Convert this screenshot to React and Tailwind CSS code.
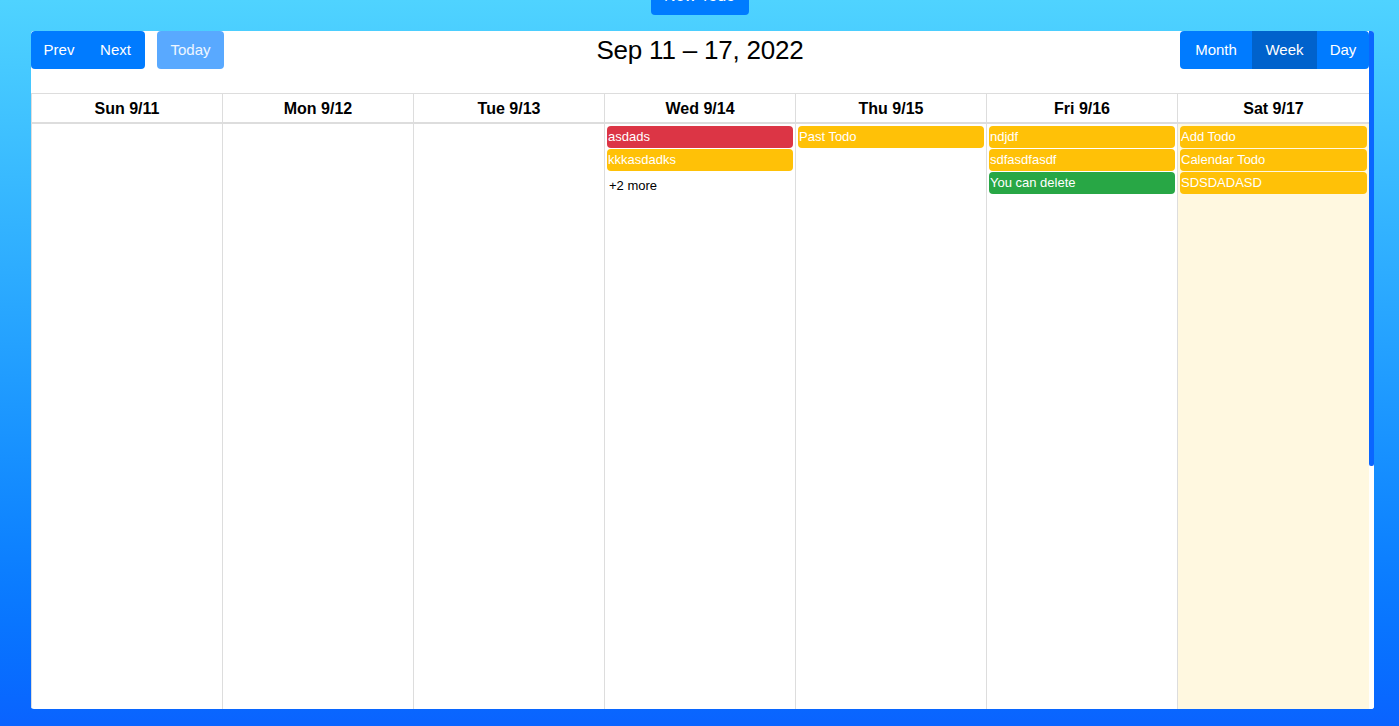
import React from 'react';

const DAYS = ['Sun 9/11', 'Mon 9/12', 'Tue 9/13', 'Wed 9/14', 'Thu 9/15', 'Fri 9/16', 'Sat 9/17'];

const EVENTS = {
  3: [
    { title: 'asdads', color: 'bg-[#dc3545]' },
    { title: 'kkkasdadks', color: 'bg-[#ffc107]' },
  ],
  4: [{ title: 'Past Todo', color: 'bg-[#ffc107]' }],
  5: [
    { title: 'ndjdf', color: 'bg-[#ffc107]' },
    { title: 'sdfasdfasdf', color: 'bg-[#ffc107]' },
    { title: 'You can delete', color: 'bg-[#28a745]' },
  ],
  6: [
    { title: 'Add Todo', color: 'bg-[#ffc107]' },
    { title: 'Calendar Todo', color: 'bg-[#ffc107]' },
    { title: 'SDSDADASD', color: 'bg-[#ffc107]' },
  ],
};

const MORE = { 3: 2 };

export default function App() {
  return (
    <div
      className="h-[726px] overflow-hidden bg-gradient-to-b from-[#4fd3ff] to-[#0a63ff] text-[#212529]"
      style={{ fontFamily: '"Liberation Sans", Arial, sans-serif' }}
    >
      <div className="flex h-[15px] justify-center">
        <button
          type="button"
          className="-mt-[23px] h-[38px] w-[98px] rounded-[4px] bg-[#007bff] text-[16px] text-white"
        >
          New Todo
        </button>
      </div>

      <div className="ml-[31px] mt-[16px] flex h-[678px] w-[1343px] overflow-hidden rounded-[3px] bg-white">
        <div className="flex w-[1338px] flex-col">
          <div className="relative flex h-[38px] items-center justify-between">
            <div className="flex items-center gap-[12px]">
              <div className="flex h-[38px] overflow-hidden rounded-[4px] bg-[#007bff] text-[15px] text-white">
                <button type="button" className="w-[55px] pl-[1px] pt-[1px]">Prev</button>
                <button type="button" className="w-[59px] pt-[1px]">Next</button>
              </div>
              <button
                type="button"
                className="h-[38px] w-[67px] rounded-[4px] bg-[#59a9ff] pt-[1px] text-[15px] text-white/90"
              >
                Today
              </button>
            </div>
            <h1 className="absolute left-1/2 top-0 -translate-x-1/2 text-[26px] tracking-[-0.2px] text-black">
              Sep 11 – 17, 2022
            </h1>
            <div className="flex h-[38px] overflow-hidden rounded-[4px] bg-[#007bff] pt-[1px] text-[15px] text-white">
              <button type="button" className="w-[72px]">Month</button>
              <button type="button" className="-mt-[1px] w-[65px] bg-[#0062cc] pt-[1px]">Week</button>
              <button type="button" className="w-[52px]">Day</button>
            </div>
          </div>

          <div className="mt-[24px] grid h-[31px] grid-cols-7 border-t border-l border-b-2 border-[#dddddd]">
            {DAYS.map((d, i) => (
              <div
                key={d}
                className={`flex items-center justify-center pt-[2px] text-[16px] font-bold text-black ${i < 6 ? 'border-r border-[#dddddd]' : ''}`}
              >
                {d}
              </div>
            ))}
          </div>

          <div className="grid flex-1 grid-cols-7 border-l border-[#dddddd]">
            {DAYS.map((d, i) => (
              <div
                key={d}
                className={`flex flex-col gap-[1px] px-[2px] pt-[2px] ${i < 6 ? 'border-r border-[#dddddd]' : 'bg-[#fff8e0]'}`}
              >
                {(EVENTS[i] || []).map((ev) => (
                  <div
                    key={ev.title}
                    className={`h-[22px] rounded-[4px] px-[1px] text-[13px] leading-[22px] text-white ${ev.color}`}
                  >
                    {ev.title}
                  </div>
                ))}
                {MORE[i] && (
                  <div className="mt-[3px] px-[2px] text-[13px] leading-[22px] text-black">+{MORE[i]} more</div>
                )}
              </div>
            ))}
          </div>
        </div>

        <div className="flex w-[5px] flex-col">
          <div className="h-[435px] rounded-b-[2px] bg-[#0a66ff]" />
          <div className="flex-1 bg-white" />
        </div>
      </div>
    </div>
  );
}
